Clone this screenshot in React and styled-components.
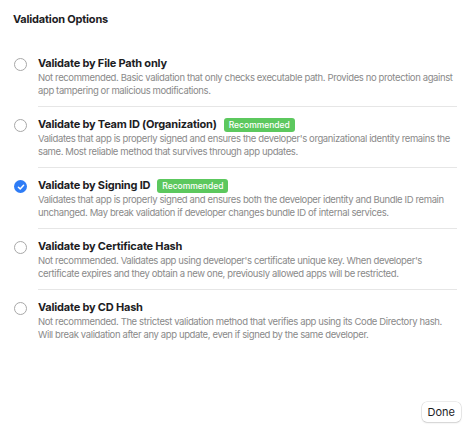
import React, { useState } from 'react';
import styled, { createGlobalStyle } from 'styled-components';

const GlobalStyle = createGlobalStyle`
  html, body {
    margin: 0;
    padding: 0;
    background: #ffffff;
  }
  body {
    font-family: Inter, "Helvetica Neue", Arial, sans-serif;
    -webkit-font-smoothing: antialiased;
  }
`;

const OPTIONS = [
  {
    id: 'path',
    title: 'Validate by File Path only',
    text: 'Not recommended. Basic validation that only checks executable path. Provides no protection against app tampering or malicious modifications.',
  },
  {
    id: 'team',
    title: 'Validate by Team ID (Organization)',
    recommended: true,
    text: "Validates that app is properly signed and ensures the developer's organizational identity remains the same. Most reliable method that survives through app updates.",
  },
  {
    id: 'signing',
    title: 'Validate by Signing ID',
    recommended: true,
    text: 'Validates that app is properly signed and ensures both the developer identity and Bundle ID remain unchanged. May break validation if developer changes bundle ID of internal services.',
  },
  {
    id: 'cert',
    title: 'Validate by Certificate Hash',
    text: "Not recommended. Validates app using developer's certificate unique key. When developer's certificate expires and they obtain a new one, previously allowed apps will be restricted.",
  },
  {
    id: 'cdhash',
    title: 'Validate by CD Hash',
    text: 'Not recommended. The strictest validation method that verifies app using its Code Directory hash. Will break validation after any app update, even if signed by the same developer.',
  },
];

function Radio({ checked }) {
  return (
    <RadioMark $checked={checked}>
      {checked && (
        <svg width="8" height="8" viewBox="0 0 8 8">
          <path d="M1.4 4.2 L3.2 5.9 L6.6 2.2" fill="none" stroke="#fff" strokeWidth="1.5" strokeLinecap="round" strokeLinejoin="round" />
        </svg>
      )}
    </RadioMark>
  );
}

export default function App() {
  const [selected, setSelected] = useState('signing');

  return (
    <>
      <GlobalStyle />
      <Sheet>
        <Heading>Validation Options</Heading>
        <OptionList>
          {OPTIONS.map((opt, i) => (
            <Option key={opt.id} onClick={() => setSelected(opt.id)}>
              <Radio checked={selected === opt.id} />
              <OptionBody $last={i === OPTIONS.length - 1}>
                <OptionTitle>
                  {opt.title}
                  {opt.recommended && <Badge>Recommended</Badge>}
                </OptionTitle>
                <OptionText>{opt.text}</OptionText>
              </OptionBody>
            </Option>
          ))}
        </OptionList>
        <Footer>
          <DoneButton>Done</DoneButton>
        </Footer>
      </Sheet>
    </>
  );
}

const Sheet = styled.div`
  width: 474px;
  height: 434px;
  box-sizing: border-box;
  padding: 11px 13px 12px 13px;
  display: flex;
  flex-direction: column;
  background: #fff;
  color: #1d1d1f;
`;

const Heading = styled.h1`
  margin: 0;
  font-size: 11px;
  font-weight: 700;
  letter-spacing: -0.2px;
  line-height: 16px;
`;

const OptionList = styled.div`
  margin-top: 19px;
  display: flex;
  flex-direction: column;
`;

const Option = styled.div`
  display: flex;
  align-items: flex-start;
  gap: 11px;
  padding: 10px 0 0 1px;
  cursor: default;
`;

const RadioMark = styled.span`
  flex: none;
  width: 13px;
  height: 13px;
  margin-top: 2px;
  border-radius: 50%;
  box-sizing: border-box;
  border: ${(p) => (p.$checked ? 'none' : '1px solid #a8a8a8')};
  background: ${(p) => (p.$checked ? '#2e7cf6' : '#fff')};
  display: flex;
  align-items: center;
  justify-content: center;
`;

const OptionBody = styled.div`
  flex: 1;
  margin-right: 4px;
  padding-bottom: 9px;
  border-bottom: ${(p) => (p.$last ? 'none' : '1px solid #e6e6e6')};
`;

const OptionTitle = styled.div`
  display: flex;
  align-items: center;
  gap: 7px;
  font-size: 11px;
  font-weight: 700;
  letter-spacing: -0.2px;
  line-height: 15px;
  color: #1d1d1f;
`;

const Badge = styled.span`
  display: inline-block;
  padding: 0 5px;
  height: 14px;
  line-height: 14px;
  border-radius: 3px;
  background: #5cc85e;
  color: #fff;
  font-size: 8.5px;
  font-weight: 500;
  letter-spacing: 0;
`;

const OptionText = styled.p`
  margin: 0;
  font-size: 9.5px;
  letter-spacing: -0.38px;
  line-height: 13px;
  color: #8a8a8a;
`;

const Footer = styled.div`
  margin-top: auto;
  display: flex;
  justify-content: flex-end;
`;

const DoneButton = styled.button`
  font-family: inherit;
  font-size: 11px;
  color: #1d1d1f;
  background: #fff;
  border: none;
  border-radius: 5px;
  padding: 3px 6px;
  box-shadow: 0 0 0 0.5px rgba(0, 0, 0, 0.14), 0 1px 2px rgba(0, 0, 0, 0.12);
`;
